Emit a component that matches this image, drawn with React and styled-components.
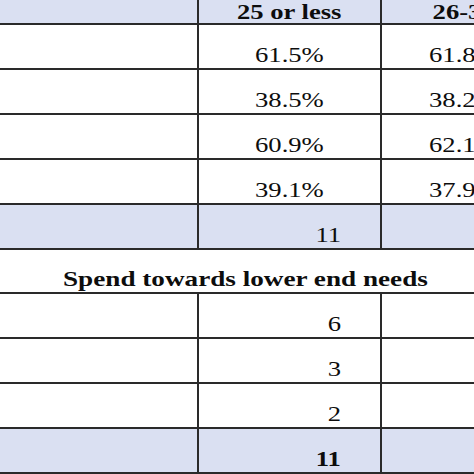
import React from 'react';
import styled, { createGlobalStyle } from 'styled-components';

const GlobalStyle = createGlobalStyle`
    html, body {
        margin: 0;
        padding: 0;
        background: #fff;
        overflow: hidden;
    }
    body {
        width: 474px;
        height: 474px;
        font-family: "Liberation Serif", serif;
        color: #111;
    }
`;

const Sheet = styled.div`
    width: 474px;
    height: 474px;
    overflow: hidden;
`;

const Table = styled.table`
    border-collapse: collapse;
    table-layout: fixed;
    width: 560px;
    font-family: "Liberation Serif", serif;
    font-size: 22px;
    color: #0d0d0d;
`;

const Row = styled.tr`
    height: ${props => props.h || 45}px;
    background: ${props => (props.shade ? '#dae0f2' : '#fff')};
`;

const Cell = styled.td`
    border: 2px solid #2a2a2a;
    border-top: ${props => (props.noTop ? 'none' : '2px solid #2a2a2a')};
    border-left: ${props => (props.first ? 'none' : '2px solid #2a2a2a')};
    padding: 0 ${props => props.pr || 0}px ${props => (props.noTop ? 0 : 1)}px 0;
    vertical-align: bottom;
    text-align: ${props => props.align || 'center'};
    font-weight: ${props => (props.bold ? 700 : 400)};
    white-space: nowrap;
    overflow: hidden;
    line-height: ${props => (props.noTop ? '22px' : '1.15')};
`;

const TitleCell = styled.td`
    border-top: 2px solid #2a2a2a;
    border-bottom: 2px solid #2a2a2a;
    border-left: none;
    border-right: none;
    padding: 0 0 1px 0;
    vertical-align: bottom;
    font-weight: 700;
    white-space: nowrap;
    line-height: 1.15;
`;

const TitleText = styled.span`
    display: inline-block;
    margin-left: 63px;
    transform: scaleX(1.235);
    transform-origin: left center;
`;

const Wide = styled.span`
    display: inline-block;
    transform: scaleX(1.21);
    transform-origin: ${props => props.origin || 'center'} center;
`;

const pctRows = [
    ['61.5%', '61.8%'],
    ['38.5%', '38.2%'],
    ['60.9%', '62.1%'],
    ['39.1%', '37.9%'],
];

const counts = ['6', '3', '2'];

const App = () => {
    return (
        <Sheet>
            <GlobalStyle />
            <Table>
                <colgroup>
                    <col style={{ width: '198px' }} />
                    <col style={{ width: '183px' }} />
                    <col style={{ width: '165px' }} />
                    <col />
                </colgroup>
                <tbody>
                    <Row h={24} shade>
                        <Cell first noTop />
                        <Cell noTop bold><Wide>25 or less</Wide></Cell>
                        <Cell noTop bold><Wide>26-35</Wide></Cell>
                        <Cell noTop bold />
                    </Row>
                    {pctRows.map((r, i) => (
                        <Row key={i}>
                            <Cell first />
                            <Cell><Wide>{r[0]}</Wide></Cell>
                            <Cell><Wide>{r[1]}</Wide></Cell>
                            <Cell />
                        </Row>
                    ))}
                    <Row shade>
                        <Cell first />
                        <Cell align="right" pr={39}><Wide origin="right">11</Wide></Cell>
                        <Cell />
                        <Cell />
                    </Row>
                    <Row h={44}>
                        <TitleCell colSpan={4}>
                            <TitleText>Spend towards lower end needs</TitleText>
                        </TitleCell>
                    </Row>
                    {counts.map((c, i) => (
                        <Row key={i}>
                            <Cell first />
                            <Cell align="right" pr={39}><Wide origin="right">{c}</Wide></Cell>
                            <Cell />
                            <Cell />
                        </Row>
                    ))}
                    <Row shade>
                        <Cell first />
                        <Cell align="right" pr={39} bold><Wide origin="right">11</Wide></Cell>
                        <Cell />
                        <Cell />
                    </Row>
                </tbody>
            </Table>
        </Sheet>
    );
};

export default App;
